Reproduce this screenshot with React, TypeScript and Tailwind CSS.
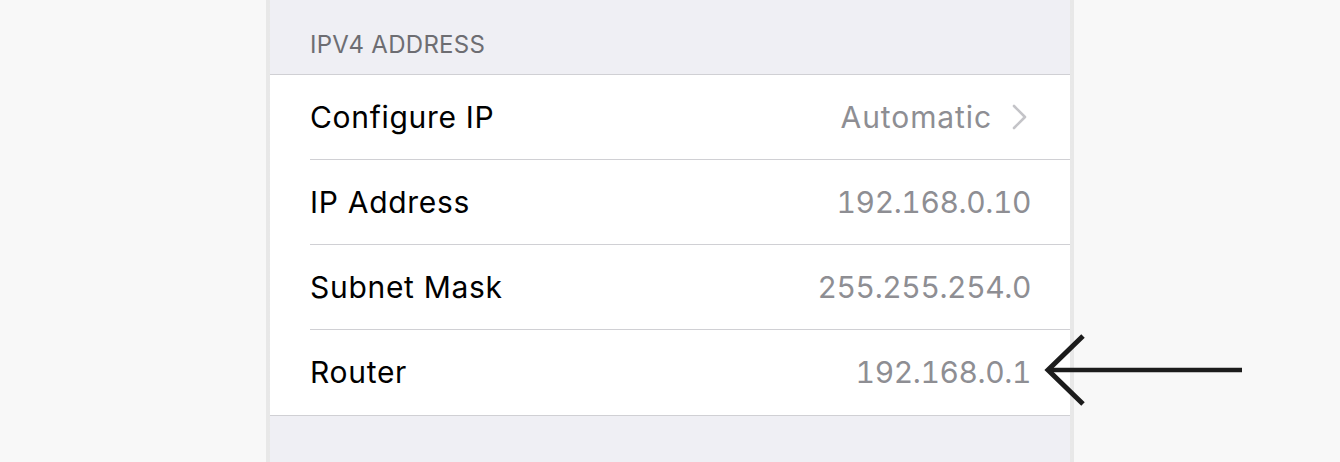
const rows = [
  { label: 'Configure IP', value: 'Automatic', chevron: true },
  { label: 'IP Address', value: '192.168.0.10' },
  { label: 'Subnet Mask', value: '255.255.254.0' },
  { label: 'Router', value: '192.168.0.1', arrow: true },
];

function Chevron() {
  return (
    <svg width="16" height="28" viewBox="0 0 16 28" className="ml-[20px] mr-[2px]">
      <path d="M2 3 L13 14 L2 25" fill="none" stroke="#c4c4c8" strokeWidth="2.6" strokeLinecap="round" strokeLinejoin="round" />
    </svg>
  );
}

function Arrow() {
  return (
    <svg width="200" height="76" viewBox="0 0 200 76" className="absolute left-[1044px] top-[332px]">
      <path d="M4 38 L198 38" stroke="#1c1c1c" strokeWidth="4.5" />
      <path d="M39 4 L4 38 L39 72" fill="none" stroke="#1c1c1c" strokeWidth="5" />
    </svg>
  );
}

export default function App() {
  return (
    <div
      className="relative w-[1340px] h-[462px] bg-[#f8f8f8] flex justify-center overflow-hidden"
      style={{ fontFamily: 'Inter, "Liberation Sans", sans-serif' }}
    >
      <div className="w-[808px] h-full px-[4px] bg-gradient-to-r from-[#e8e8e8] via-[#f8f8f8] to-[#e8e8e8]">
        <div className="w-[800px] h-full bg-[#efeff4] flex flex-col">
          <div className="h-[74px] flex items-end pb-[11px] pl-[40px] text-[#6d6d72] text-[24px] tracking-[0.3px]">
            IPV4 ADDRESS
          </div>
          <div className="bg-white border-y border-[#d0d0d4]">
            {rows.map((r, i) => (
              <div key={r.label} className="pl-[40px]">
                <div
                  className={`h-[85px] flex items-center pr-[40px] ${i < rows.length - 1 ? 'border-b border-[#d0d0d4]' : ''}`}
                >
                  <span className="text-[30px] text-black tracking-[0.7px]">{r.label}</span>
                  {r.chevron ? (
                    <span className="ml-auto text-[30px] text-[#8e8e93] tracking-[0.9px]">{r.value}</span>
                  ) : (
                    <span className="ml-auto -mr-[1px] text-[30px] text-[#8e8e93] tracking-[-0.4px] tabular-nums">{r.value}</span>
                  )}
                  {r.chevron && <Chevron />}
                </div>
              </div>
            ))}
          </div>
        </div>
      </div>
      <Arrow />
    </div>
  );
}
